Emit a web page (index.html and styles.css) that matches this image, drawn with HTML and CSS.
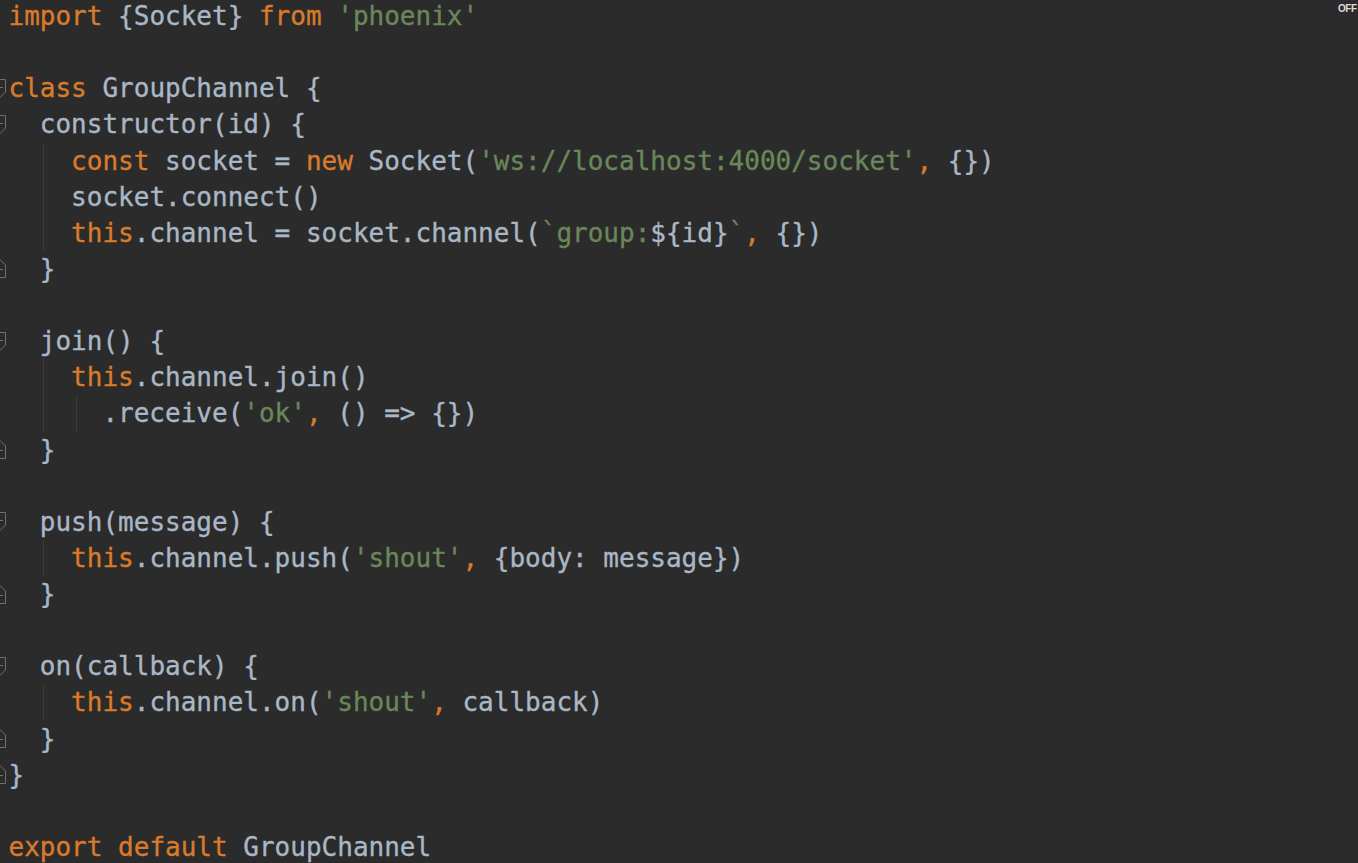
FILE: index.html
```html
<!DOCTYPE html>
<html>
<head>
<meta charset="utf-8">
<link rel="stylesheet" href="styles.css">
</head>
<body>
<div class="status">OFF</div>
<div class="editor">
  <div class="line"><span class="gutter"></span><span class="code"><span class="k">import</span> {Socket} <span class="k">from</span> <span class="s">'phoenix'</span></span></div>
  <div class="line"><span class="gutter"></span><span class="code"></span></div>
  <div class="line"><span class="gutter"><svg class="fold" viewBox="0 0 12 19" width="12" height="19"><path d="M0.5 0.5H11.5V13L6 18.5L0.5 13Z"/><path d="M3 8.5H9"/></svg></span><span class="code"><span class="k">class</span> GroupChannel {</span></div>
  <div class="line"><span class="gutter"><svg class="fold" viewBox="0 0 12 19" width="12" height="19"><path d="M0.5 0.5H11.5V13L6 18.5L0.5 13Z"/><path d="M3 8.5H9"/></svg></span><span class="code">  constructor(id) {</span></div>
  <div class="line"><span class="gutter"></span><span class="code">  <span class="g1"></span><span class="k">const</span> socket = <span class="k">new</span> Socket(<span class="s">'ws://localhost:4000/socket'</span><span class="k">,</span> {})</span></div>
  <div class="line"><span class="gutter"></span><span class="code">  <span class="g1"></span>socket.connect()</span></div>
  <div class="line"><span class="gutter"></span><span class="code">  <span class="g1"></span><span class="k">this</span>.channel = socket.channel(<span class="s">`group:</span>${id}<span class="s">`</span><span class="k">,</span> {})</span></div>
  <div class="line"><span class="gutter"><svg class="fold" viewBox="0 0 12 19" width="12" height="19"><path d="M0.5 18.5H11.5V6L6 0.5L0.5 6Z"/><path d="M3 10.5H9"/></svg></span><span class="code">  }</span></div>
  <div class="line"><span class="gutter"></span><span class="code"></span></div>
  <div class="line"><span class="gutter"><svg class="fold" viewBox="0 0 12 19" width="12" height="19"><path d="M0.5 0.5H11.5V13L6 18.5L0.5 13Z"/><path d="M3 8.5H9"/></svg></span><span class="code">  join() {</span></div>
  <div class="line"><span class="gutter"></span><span class="code">  <span class="g1"></span><span class="k">this</span>.channel.join()</span></div>
  <div class="line"><span class="gutter"></span><span class="code">  <span class="g1"></span><span class="g2"></span>.receive(<span class="s">'ok'</span><span class="k">,</span> () =&gt; {})</span></div>
  <div class="line"><span class="gutter"><svg class="fold" viewBox="0 0 12 19" width="12" height="19"><path d="M0.5 18.5H11.5V6L6 0.5L0.5 6Z"/><path d="M3 10.5H9"/></svg></span><span class="code">  }</span></div>
  <div class="line"><span class="gutter"></span><span class="code"></span></div>
  <div class="line"><span class="gutter"><svg class="fold" viewBox="0 0 12 19" width="12" height="19"><path d="M0.5 0.5H11.5V13L6 18.5L0.5 13Z"/><path d="M3 8.5H9"/></svg></span><span class="code">  push(message) {</span></div>
  <div class="line"><span class="gutter"></span><span class="code">  <span class="g1"></span><span class="k">this</span>.channel.push(<span class="s">'shout'</span><span class="k">,</span> {body: message})</span></div>
  <div class="line"><span class="gutter"><svg class="fold" viewBox="0 0 12 19" width="12" height="19"><path d="M0.5 18.5H11.5V6L6 0.5L0.5 6Z"/><path d="M3 10.5H9"/></svg></span><span class="code">  }</span></div>
  <div class="line"><span class="gutter"></span><span class="code"></span></div>
  <div class="line"><span class="gutter"><svg class="fold" viewBox="0 0 12 19" width="12" height="19"><path d="M0.5 0.5H11.5V13L6 18.5L0.5 13Z"/><path d="M3 8.5H9"/></svg></span><span class="code">  on(callback) {</span></div>
  <div class="line"><span class="gutter"></span><span class="code">  <span class="g1"></span><span class="k">this</span>.channel.on(<span class="s">'shout'</span><span class="k">,</span> callback)</span></div>
  <div class="line"><span class="gutter"><svg class="fold" viewBox="0 0 12 19" width="12" height="19"><path d="M0.5 18.5H11.5V6L6 0.5L0.5 6Z"/><path d="M3 10.5H9"/></svg></span><span class="code">  }</span></div>
  <div class="line"><span class="gutter"><svg class="fold" viewBox="0 0 12 19" width="12" height="19"><path d="M0.5 18.5H11.5V6L6 0.5L0.5 6Z"/><path d="M3 10.5H9"/></svg></span><span class="code">}</span></div>
  <div class="line"><span class="gutter"></span><span class="code"></span></div>
  <div class="line"><span class="gutter"></span><span class="code"><span class="k">export</span> <span class="k">default</span> GroupChannel</span></div>
</div>
</body>
</html>
```
FILE: styles.css
```css
html, body {
  margin: 0;
  padding: 0;
  background: #2b2b2b;
  overflow: hidden;
  width: 1358px;
  height: 863px;
}

.status {
  position: absolute;
  top: 3px;
  left: 1338px;
  font-family: "Liberation Sans", sans-serif;
  font-size: 10px;
  font-weight: bold;
  color: #dcdcdc;
  letter-spacing: -0.5px;
}

.editor {
  margin-top: -2px;
  font-family: "DejaVu Sans Mono", monospace;
  font-size: 26px;
  color: #a9b7c6;
  -webkit-text-stroke: 0.35px currentColor;
}

.line {
  display: flex;
  align-items: stretch;
  height: 36.13px;
}

.gutter {
  flex: none;
  width: 8.5px;
  display: flex;
  align-items: center;
}

.fold {
  flex: none;
  margin-left: -6px;
  fill: none;
  stroke: #707070;
  stroke-width: 1;
}

.code {
  white-space: pre;
  line-height: 36.13px;
}

.g1, .g2 {
  display: inline-block;
  width: 2ch;
  height: 36.13px;
  vertical-align: top;
}

.g1 {
  background: linear-gradient(to right, transparent 3px, #3b3b3b 3px, #3b3b3b 4px, transparent 4px);
}

.g2 {
  background: linear-gradient(to right, transparent 5px, #3b3b3b 5px, #3b3b3b 6px, transparent 6px);
}

.k { color: #d97b2b; }
.s { color: #6a8759; }
```
